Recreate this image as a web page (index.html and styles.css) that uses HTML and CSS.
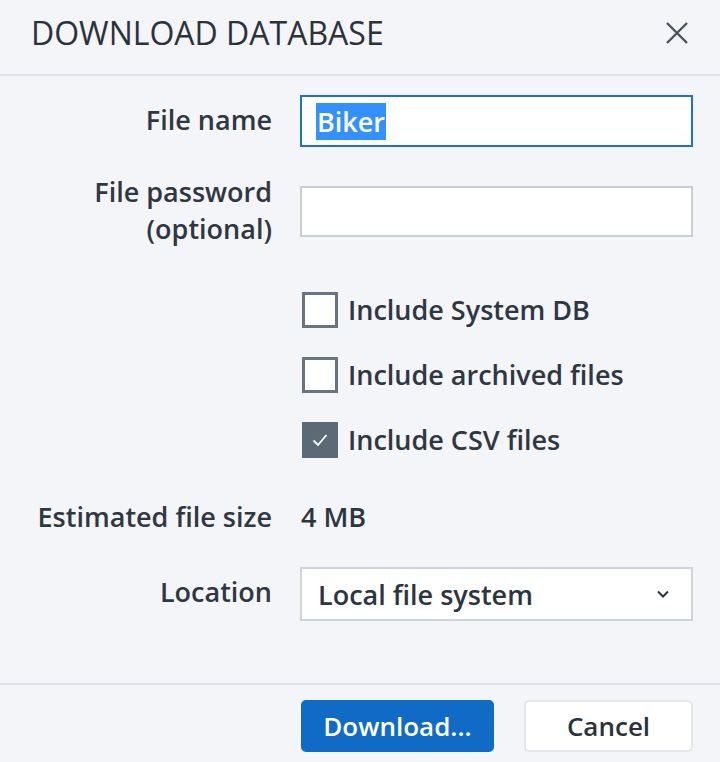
FILE: index.html
```html
<!DOCTYPE html>
<html lang="en">
<head>
    <meta charset="UTF-8">
    <title>Download Database</title>
    <link rel="stylesheet" href="styles.css">
</head>
<body>
<div class="dialog">
    <div class="dialog__header">
        <span class="dialog__title">DOWNLOAD DATABASE</span>
        <svg class="dialog__close" width="26" height="26" viewBox="0 0 26 26">
            <path d="M3 3 L23 23 M23 3 L3 23" stroke="#4a525c" stroke-width="2.4" fill="none"/>
        </svg>
    </div>

    <div class="dialog__body">
        <div class="row row--name">
            <label class="row__label">File name</label>
            <div class="field field--focus"><span class="field__selected">Biker</span></div>
        </div>

        <div class="row row--password">
            <label class="row__label">File password<br>(optional)</label>
            <div class="field"></div>
        </div>

        <div class="row row--check first">
            <span></span>
            <div class="check">
                <span class="check__box"></span>
                <span class="check__text">Include System DB</span>
            </div>
        </div>
        <div class="row row--check">
            <span></span>
            <div class="check">
                <span class="check__box"></span>
                <span class="check__text">Include archived files</span>
            </div>
        </div>
        <div class="row row--check">
            <span></span>
            <div class="check">
                <span class="check__box checked">
                    <svg width="20" height="20" viewBox="0 0 20 20">
                        <path d="M3.5 10.5 L8 15 L16.5 5" stroke="#fff" stroke-width="1.8" fill="none"/>
                    </svg>
                </span>
                <span class="check__text">Include CSV files</span>
            </div>
        </div>

        <div class="row row--size">
            <label class="row__label">Estimated file size</label>
            <span class="row__value">4 MB</span>
        </div>

        <div class="row row--location">
            <label class="row__label">Location</label>
            <div class="select">
                <span>Local file system</span>
                <svg width="14" height="10" viewBox="0 0 14 10">
                    <path d="M2 2.5 L7 7.5 L12 2.5" stroke="#2b333d" stroke-width="2" fill="none"/>
                </svg>
            </div>
        </div>
    </div>

    <div class="dialog__footer">
        <button class="btn btn--primary">Download...</button>
        <button class="btn">Cancel</button>
    </div>
</div>
</body>
</html>
```

FILE: styles.css
```css
html, body {
    margin: 0;
    padding: 0;
    height: 100%;
}

body {
    background: #f4f5f8;
    font-family: "Open Sans", "Noto Sans", sans-serif;
    color: #2c3540;
}

.dialog {
    width: 720px;
    height: 762px;
    display: flex;
    flex-direction: column;
}

.dialog__header {
    display: flex;
    align-items: center;
    justify-content: space-between;
    padding: 0 30px 0 31px;
    border-bottom: 2px solid #dfe2e8;
    box-sizing: border-box;
    height: 76px;
}

.dialog__title {
    font-size: 32px;
    font-weight: 400;
    color: #2a323c;
    margin-top: -9px;
}

.dialog__close {
    margin-top: -8px;
}

.dialog__body {
    padding-top: 19px;
    flex: 1;
}

.row {
    display: grid;
    grid-template-columns: 272px 393px;
    column-gap: 28px;
    align-items: center;
    font-size: 27px;
    font-weight: 600;
    line-height: 37px;
}

.row__label {
    text-align: right;
    color: #2e3742;
}

.row--name .row__label {
    margin-top: -4px;
}

.field {
    height: 52px;
    box-sizing: border-box;
    background: #fff;
    border: 2px solid #c7ced6;
    display: flex;
    align-items: center;
    padding-left: 14px;
}

.row--password .field {
    height: 51px;
}

.field--focus {
    border-color: #1f6fcf;
}

.field__selected {
    background: #3391ff;
    color: #fff;
    line-height: 37px;
    padding: 0 1px;
}

.row--password {
    margin-top: 28px;
}

.row--password .row__label {
    margin-top: -2px;
}

.row--check {
    margin-top: 29px;
}

.row--check.first {
    margin-top: 45px;
}

.check {
    display: flex;
    align-items: center;
    gap: 10px;
    margin-left: 2px;
}

.check__box {
    width: 36px;
    height: 36px;
    box-sizing: border-box;
    border: 3px solid #6a747f;
    background: #fff;
    display: flex;
    align-items: center;
    justify-content: center;
}

.check__box.checked {
    background: #5c6a78;
    border-color: #5c6a78;
}

.check__text {
    color: #2e3742;
    margin-top: -2px;
}

.row--size {
    margin-top: 40px;
}

.row--size .row__value {
    margin-left: 1px;
}

.row--location {
    margin-top: 32px;
}

.row--location .row__label {
    margin-top: -6px;
}

.select {
    height: 54px;
    box-sizing: border-box;
    background: #fff;
    border: 2px solid #cdd3da;
    display: flex;
    align-items: center;
    justify-content: space-between;
    padding: 0 21px 0 16px;
}

.dialog__footer {
    border-top: 2px solid #dfe2e8;
    display: flex;
    justify-content: flex-end;
    gap: 30px;
    padding: 15px 27px 10px 0;
}

.btn {
    font-family: inherit;
    font-size: 26px;
    font-weight: 600;
    height: 52px;
    width: 169px;
    background: #fff;
    border: 2px solid #e3e6ea;
    border-radius: 5px;
    color: #2a323c;
}

.btn--primary {
    width: 193px;
    background: #0f6bc6;
    border-color: #0f6bc6;
    color: #fff;
}
```
